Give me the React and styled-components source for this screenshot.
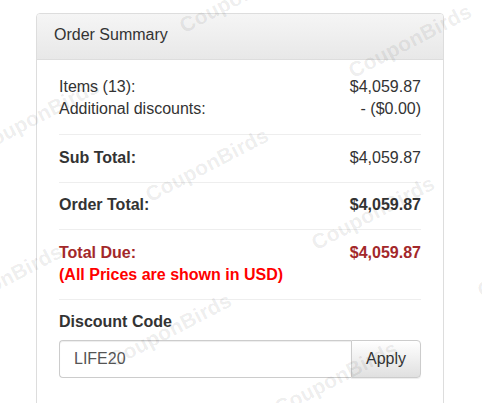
import React from "react";
import styled, { createGlobalStyle } from "styled-components";

const GlobalStyle = createGlobalStyle`
  html, body {
    margin: 0;
    padding: 0;
    background: #ffffff;
  }
  body {
    font-family: "Liberation Sans", Arial, Helvetica, sans-serif;
    font-size: 16px;
    color: #333333;
    overflow: hidden;
  }
  * { box-sizing: border-box; }
`;

const Page = styled.div`
  position: relative;
  width: 482px;
  height: 403px;
  overflow: hidden;
  padding: 13px 0 0 36px;
`;

const Panel = styled.section`
  width: 408px;
  border: 1px solid #dddddd;
  border-radius: 4px;
  background: #ffffff;
`;

const PanelHeading = styled.header`
  padding: 11px 17px 14px;
  line-height: 20px;
  font-size: 16px;
  color: #333333;
  background: linear-gradient(to bottom, #f5f5f5 0%, #e8e8e8 100%);
  border-bottom: 1px solid #dddddd;
  border-radius: 3px 3px 0 0;
`;

const PanelBody = styled.div`
  padding: 16px 22px 40px;
`;

const Section = styled.div`
  padding: ${(p) => (p.$first ? "0 0 14px" : "11.5px 0 13px")};
  border-bottom: ${(p) => (p.$last ? "none" : "1px solid #eeeeee")};
`;

const Row = styled.div`
  display: flex;
  justify-content: space-between;
  align-items: baseline;
  line-height: 22px;
  font-size: 16px;
`;

const Label = styled.span`
  font-weight: ${(p) => (p.$bold ? 700 : 400)};
  color: ${(p) => p.$color || "#333333"};
`;

const Value = styled.span`
  font-weight: ${(p) => (p.$bold ? 700 : 400)};
  color: ${(p) => p.$color || "#333333"};
`;

const Note = styled.div`
  line-height: 22px;
  font-size: 16px;
  font-weight: 700;
  color: #ff0000;
`;

const FieldLabel = styled.label`
  display: block;
  line-height: 22px;
  font-size: 16px;
  font-weight: 700;
  color: #333333;
  margin-bottom: 6.5px;
`;

const InputGroup = styled.div`
  display: flex;
  height: 38px;
`;

const CodeInput = styled.input`
  flex: 1;
  min-width: 0;
  height: 38px;
  margin: 0;
  padding: 0 14px;
  border: 1px solid #cccccc;
  border-right: none;
  border-radius: 4px 0 0 4px;
  box-shadow: inset 0 1px 1px rgba(0, 0, 0, 0.075);
  font-family: "Liberation Sans", Arial, Helvetica, sans-serif;
  font-size: 16px;
  color: #555555;
  background: #ffffff;
  outline: none;
`;

const ApplyButton = styled.button`
  width: 70px;
  height: 38px;
  margin: 0;
  padding: 0 14px;
  border: 1px solid #cccccc;
  border-radius: 0 4px 4px 0;
  background: linear-gradient(to bottom, #ffffff 0%, #e0e0e0 100%);
  box-shadow: inset 0 1px 0 rgba(255, 255, 255, 0.15), 0 1px 1px rgba(0, 0, 0, 0.075);
  font-family: "Liberation Sans", Arial, Helvetica, sans-serif;
  font-size: 16px;
  color: #333333;
  cursor: pointer;
`;

const WatermarkLayer = styled.div`
  position: absolute;
  inset: 0;
  pointer-events: none;
  overflow: hidden;
`;

const Watermark = styled.span`
  position: absolute;
  left: ${(p) => p.$x}px;
  top: ${(p) => p.$y}px;
  transform: translate(-50%, -50%) rotate(-27.5deg);
  font-family: "Liberation Sans", Arial, Helvetica, sans-serif;
  font-weight: 700;
  font-size: 21px;
  letter-spacing: 0.2px;
  white-space: nowrap;
  color: rgba(0, 0, 0, 0.08);
`;

const marks = [
  [241, -4],
  [410, 41],
  [560, 80],
  [38, 116],
  [207, 165],
  [373, 213],
  [539, 261],
  [1, 281],
  [170, 330],
  [336, 378],
];

export default function App() {
  return (
    <>
      <GlobalStyle />
      <Page>
        <Panel>
          <PanelHeading>Order Summary</PanelHeading>
          <PanelBody>
            <Section $first>
              <Row>
                <Label>Items (13):</Label>
                <Value>$4,059.87</Value>
              </Row>
              <Row>
                <Label>Additional discounts:</Label>
                <Value>- ($0.00)</Value>
              </Row>
            </Section>
            <Section>
              <Row>
                <Label $bold>Sub Total:</Label>
                <Value>$4,059.87</Value>
              </Row>
            </Section>
            <Section>
              <Row>
                <Label $bold>Order Total:</Label>
                <Value $bold>$4,059.87</Value>
              </Row>
            </Section>
            <Section>
              <Row>
                <Label $bold $color="#a3282a">Total Due:</Label>
                <Value $bold $color="#a3282a">$4,059.87</Value>
              </Row>
              <Note>(All Prices are shown in USD)</Note>
            </Section>
            <Section $last>
              <FieldLabel htmlFor="discount">Discount Code</FieldLabel>
              <InputGroup>
                <CodeInput id="discount" defaultValue="LIFE20" />
                <ApplyButton type="button">Apply</ApplyButton>
              </InputGroup>
            </Section>
          </PanelBody>
        </Panel>
        <WatermarkLayer>
          {marks.map(([x, y], i) => (
            <Watermark key={i} $x={x} $y={y}>
              CouponBirds
            </Watermark>
          ))}
        </WatermarkLayer>
      </Page>
    </>
  );
}
